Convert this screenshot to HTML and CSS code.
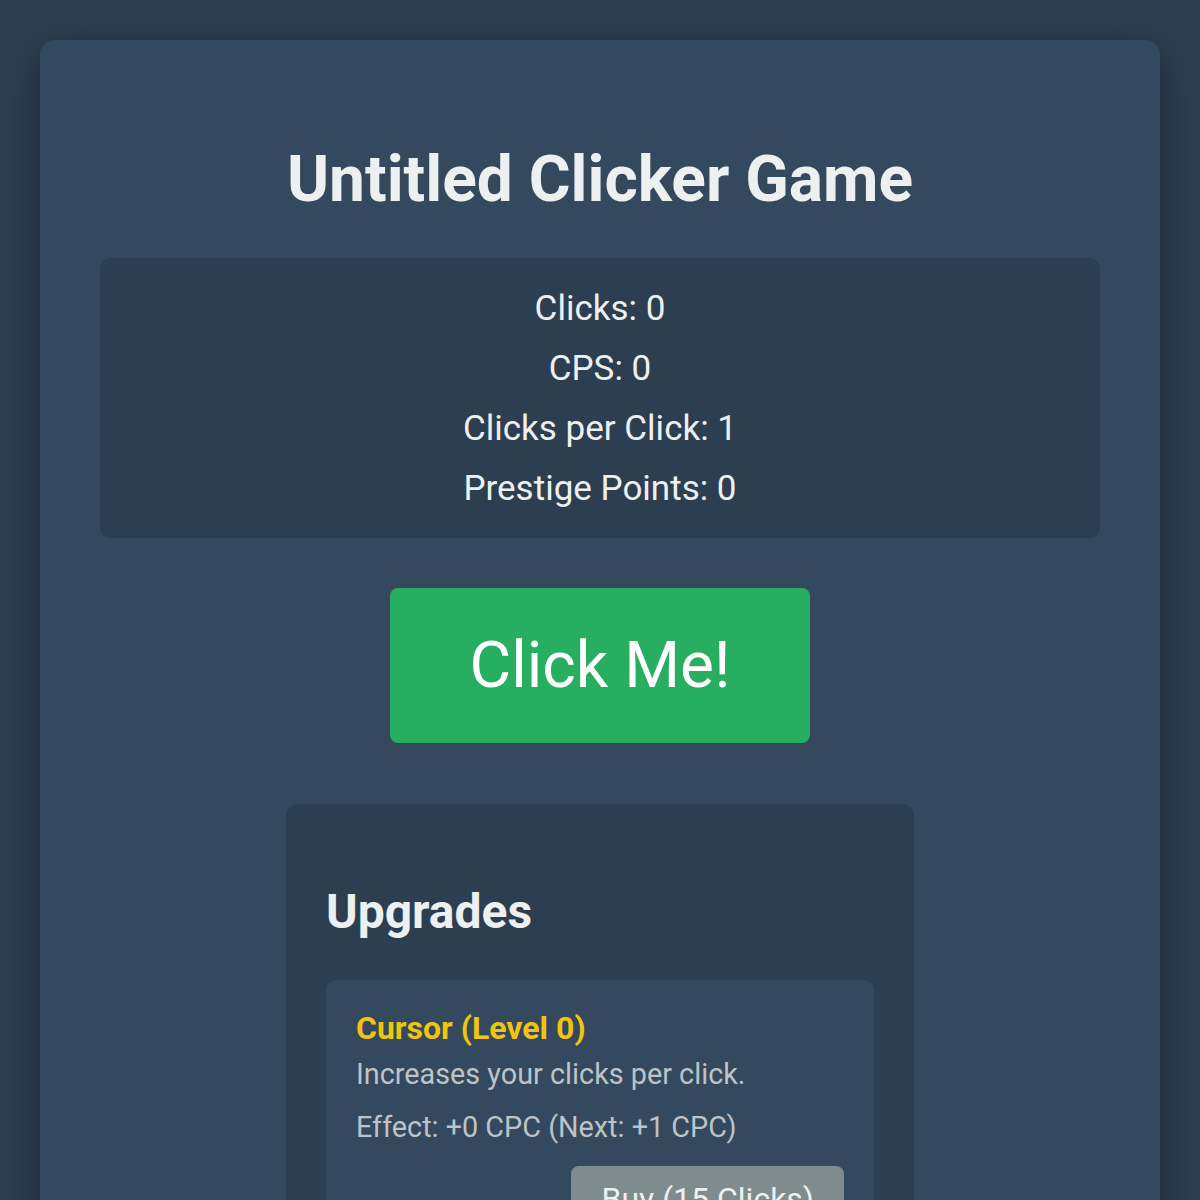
FILE: index.html
```html
<!DOCTYPE html>
<html lang="en">
<head>
<meta charset="utf-8">
<title>Untitled Clicker Game</title>
<link rel="stylesheet" href="styles.css">
</head>
<body>
<main class="game">
  <h1 class="title">Untitled Clicker Game</h1>
  <section class="stats">
    <div class="stat">Clicks: 0</div>
    <div class="stat">CPS: 0</div>
    <div class="stat">Clicks per Click: 1</div>
    <div class="stat">Prestige Points: 0</div>
  </section>
  <button class="click-btn" type="button">Click Me!</button>
  <section class="upgrades">
    <h2 class="upgrades-title">Upgrades</h2>
    <div class="upgrade">
      <h3 class="upgrade-name">Cursor (Level 0)</h3>
      <p class="upgrade-desc">Increases your clicks per click.</p>
      <p class="upgrade-effect">Effect: +0 CPC (Next: +1 CPC)</p>
      <button class="buy-btn" type="button">Buy (15 Clicks)</button>
    </div>
  </section>
</main>
</body>
</html>
```

FILE: styles.css
```css
* { box-sizing: border-box; }
html, body { margin: 0; padding: 0; }
body {
  background: #2c3e50;
  font-family: Roboto, "Liberation Sans", sans-serif;
  color: #ecf0f1;
  padding: 40px;
  min-height: 1200px;
}
.game {
  background: #34495e;
  border-radius: 14px;
  box-shadow: 0 10px 40px rgba(0, 0, 0, 0.35);
  padding: 60px 60px 80px;
  display: flex;
  flex-direction: column;
  align-items: center;
  min-height: 1300px;
}
.title {
  font-size: 64px;
  font-weight: 700;
  margin: 42px 0 41px;
  line-height: 75px;
  text-align: center;
}
.stats {
  align-self: stretch;
  background: #2c3e50;
  border-radius: 10px;
  padding: 21px 20px 19px;
  text-align: center;
}
.stat {
  font-size: 35px;
  line-height: 60px;
}
.click-btn {
  margin-top: 50px;
  background: #27ae60;
  color: #ffffff;
  border: none;
  border-radius: 8px;
  font-family: Roboto, "Liberation Sans", sans-serif;
  font-size: 64px;
  line-height: 75px;
  padding: 40px 0;
  width: 420px;
  white-space: nowrap;
}
.upgrades {
  margin-top: 61px;
  width: 628px;
  background: #2c3e50;
  border-radius: 12px;
  padding: 40px;
}
.upgrades-title {
  font-size: 48px;
  font-weight: 700;
  line-height: 56px;
  margin: 40px 0;
}
.upgrade {
  background: #34495e;
  border-radius: 10px;
  padding: 30px;
  display: flex;
  flex-direction: column;
}
.upgrade-name {
  color: #f1c40f;
  font-size: 32px;
  font-weight: 700;
  line-height: 37.5px;
  margin: 0 0 10px;
}
.upgrade-desc, .upgrade-effect {
  color: #bdc3c7;
  font-size: 28.8px;
  line-height: 33.75px;
  margin: 0;
}
.upgrade-effect { margin-top: 20px; }
.buy-btn {
  align-self: flex-end;
  margin-top: 21px;
  background: #7f8c8d;
  color: #ecf0f1;
  border: none;
  border-radius: 8px;
  font-family: Roboto, "Liberation Sans", sans-serif;
  font-size: 32px;
  line-height: 37.5px;
  padding: 15px 30px;
}
```
